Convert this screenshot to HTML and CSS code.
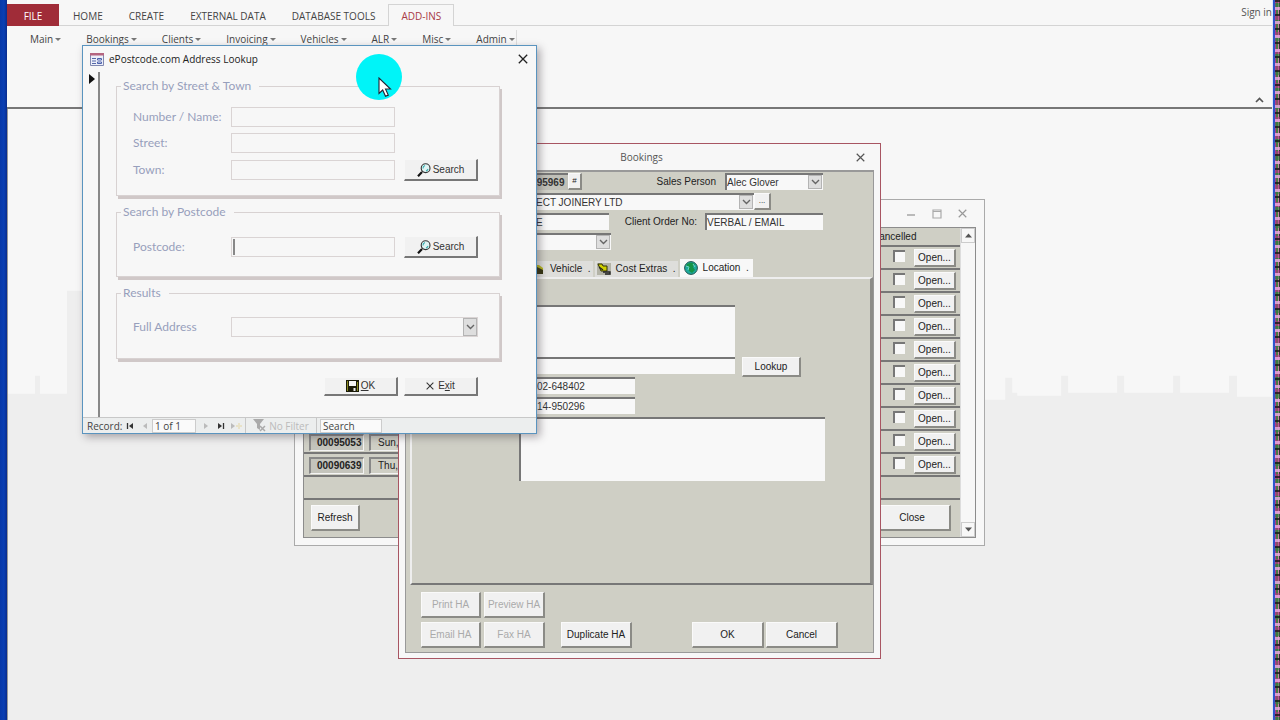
FILE: index.html
```html
<!DOCTYPE html>
<html lang="en">
<head>
<meta charset="utf-8">
<title>Bookings - Address Lookup</title>
<link rel="stylesheet" href="styles.css">
</head>
<body>
<svg class="defs" width="0" height="0" aria-hidden="true">
  <symbol id="chev" viewBox="0 0 9 6"><path d="M1 1l3.5 3.5L8 1" fill="none" stroke="#666" stroke-width="1.4"/></symbol>
  <symbol id="cross" viewBox="0 0 10 10"><path d="M.8.8l8.4 8.4M9.2.8L.8 9.2" fill="none" stroke="currentColor" stroke-width="1.3"/></symbol>
  <symbol id="lens" viewBox="0 0 14 14"><path d="M5 9L1 13.2" stroke="#111" stroke-width="2.2"/><circle cx="8.6" cy="5.2" r="4.4" fill="#dff3f3" stroke="#333" stroke-width="1.1"/><path d="M6 5.5a3 3 0 0 1 2-3M11 6a3 3 0 0 1-2 2" fill="none" stroke="#39b0b0" stroke-width="1.1"/></symbol>
</svg>
<div class="desktop">
  <div class="edge-left"></div>
  <main class="app">
    <header class="ribbon">
      <nav class="tabs">
        <button class="tab file">FILE</button>
        <button class="tab">HOME</button>
        <button class="tab">CREATE</button>
        <button class="tab">EXTERNAL DATA</button>
        <button class="tab">DATABASE TOOLS</button>
        <button class="tab active">ADD-INS</button>
        <a class="signin" href="#">Sign in</a>
      </nav>
      <div class="menus">
        <button class="menu">Main</button>
        <button class="menu">Bookings</button>
        <button class="menu">Clients</button>
        <button class="menu">Invoicing</button>
        <button class="menu">Vehicles</button>
        <button class="menu">ALR</button>
        <button class="menu">Misc</button>
        <button class="menu">Admin</button>
        <span class="menu-end"></span>
      </div>
      <button class="collapse" aria-label="Collapse ribbon"><svg width="9" height="6" viewBox="0 0 9 6"><path d="M1 5l3.500-3.500L8 5" fill="none" stroke="#555" stroke-width="1.7"/></svg></button>
    </header>
    <div class="workspace">
      <svg class="skyline" viewBox="0 0 1265 612" preserveAspectRatio="none" aria-hidden="true">
        <path fill="#eeeeee" d="M0 285H27V267H32V285H59V182H74V285H290V291H998V269H1005V284H1010V287H1054V267H1061V284H1067V284H1110V267H1117V284H1123V284H1166V267H1173V284H1180V284H1222V267H1230V288H1265V612H0Z"/>
      </svg>
    </div>
  </main>
  <div class="edge-line"></div>
  <div class="edge-right"></div>
</div>

<section class="window list-window">
  <div class="list-title">
    <button aria-label="Minimise"><svg width="10" height="10" viewBox="0 0 10 10"><path d="M1 6h8" stroke="#999" stroke-width="1.300"/></svg></button>
    <button aria-label="Maximise"><svg width="10" height="10" viewBox="0 0 10 10"><path d="M1 1h8v8H1zM1 2.500h8" fill="none" stroke="#aaa" stroke-width="1.200"/></svg></button>
    <button aria-label="Close list"><svg width="9" height="9"><use href="#cross"/></svg></button>
  </div>
  <div class="list-body">
    <div class="list-main">
      <table class="rows">
        <thead><tr><th class="c-id"></th><th class="c-date"></th><th class="c-can" colspan="2">Cancelled</th></tr></thead>
        <tbody>
          <tr><td></td><td><span class="cell"></span></td><td><input type="checkbox" aria-label="Cancelled"></td><td><button class="btn open">Open...</button></td></tr>
          <tr><td></td><td><span class="cell"></span></td><td><input type="checkbox" aria-label="Cancelled"></td><td><button class="btn open">Open...</button></td></tr>
          <tr><td></td><td><span class="cell"></span></td><td><input type="checkbox" aria-label="Cancelled"></td><td><button class="btn open">Open...</button></td></tr>
          <tr><td></td><td><span class="cell"></span></td><td><input type="checkbox" aria-label="Cancelled"></td><td><button class="btn open">Open...</button></td></tr>
          <tr><td></td><td><span class="cell"></span></td><td><input type="checkbox" aria-label="Cancelled"></td><td><button class="btn open">Open...</button></td></tr>
          <tr><td></td><td><span class="cell"></span></td><td><input type="checkbox" aria-label="Cancelled"></td><td><button class="btn open">Open...</button></td></tr>
          <tr><td></td><td><span class="cell"></span></td><td><input type="checkbox" aria-label="Cancelled"></td><td><button class="btn open">Open...</button></td></tr>
          <tr><td></td><td><span class="cell"></span></td><td><input type="checkbox" aria-label="Cancelled"></td><td><button class="btn open">Open...</button></td></tr>
          <tr><td><span class="cell id">00095053</span></td><td><span class="cell">Sun,</span></td><td><input type="checkbox" aria-label="Cancelled"></td><td><button class="btn open">Open...</button></td></tr>
          <tr><td><span class="cell id">00090639</span></td><td><span class="cell">Thu,</span></td><td><input type="checkbox" aria-label="Cancelled"></td><td><button class="btn open">Open...</button></td></tr>
          <tr><td></td><td></td><td></td><td></td></tr>
        </tbody>
      </table>
      <div class="list-foot"><button class="btn refresh">Refresh</button><button class="btn close">Close</button></div>
    </div>
    <div class="scroll">
      <button aria-label="Scroll up"><svg width="7" height="5"><path d="M0 4.500L3.500.5 7 4.500z" fill="#555"/></svg></button>
      <button aria-label="Scroll down"><svg width="7" height="5"><path d="M0 .5L3.500 4.500 7 .5z" fill="#555"/></svg></button>
    </div>
  </div>
</section>

<section class="window book-window">
  <div class="book-title"><h2>Bookings</h2><button aria-label="Close Bookings"><svg width="9" height="9"><use href="#cross"/></svg></button></div>
  <div class="book-body">
    <div class="head">
      <div class="line">
        <input class="sunk ref" value="00095969" aria-label="Booking number" readonly><button class="btn mini">#</button>
        <label for="sales" class="push">Sales Person</label>
        <span class="combo sales"><select id="sales" class="sunk"><option>Alec Glover</option></select><i><svg width="9" height="6"><use href="#chev"/></svg></i></span>
      </div>
      <div class="line">
        <span class="combo client"><select class="sunk covered" aria-label="Client"><option>ECT JOINERY LTD</option></select><i><svg width="9" height="6"><use href="#chev"/></svg></i></span><button class="btn mini wide">...</button>
      </div>
      <div class="line">
        <input class="sunk covered contact" value="E" aria-label="Contact">
        <label for="order" class="push order-label">Client Order No:</label>
        <input id="order" class="sunk order" value="VERBAL / EMAIL">
      </div>
      <div class="line">
        <span class="combo status"><select class="sunk" aria-label="Status"><option></option></select><i><svg width="9" height="6"><use href="#chev"/></svg></i></span>
      </div>
    </div>
    <div class="pagetabs">
      <button class="ptab"><svg width="14" height="12" viewBox="0 0 14 12"><path d="M0 2h8l4 3v6H0z" fill="#b7b71e"/><path d="M6 4l6 3v4H5z" fill="#33330f"/></svg>Vehicle&nbsp; .</button>
      <button class="ptab"><svg width="14" height="12" viewBox="0 0 14 12"><path d="M0 0h14v12H0z" fill="#b3b3a6"/><path d="M1 1h4l1 2h4v5H4z" fill="#d0d000" stroke="#333300"/><path d="M2 4l4 3M6 9h7v2H8" fill="none" stroke="#222" stroke-width="1.300"/></svg>Cost Extras&nbsp; .</button>
      <button class="ptab on"><svg width="14" height="14" viewBox="0 0 14 14"><circle cx="7" cy="7" r="6.400" fill="#1ca99d" stroke="#24534f"/><path d="M3 3l4-1.500 4 1.500-2 3 2 3-3 3-3-2-1-4-2-1z" fill="#159447"/><path d="M2 5l3 1-1 3M9 3l2 3" fill="none" stroke="#6ed5cb"/></svg>Location&nbsp; .</button>
    </div>
    <div class="pane">
      <textarea class="sunk addr" aria-label="Address"></textarea>
      <div class="post"><input class="sunk" aria-label="Postcode of location"><button class="btn lookup">Lookup</button></div>
      <input class="sunk phone covered" value="02-648402" aria-label="Phone">
      <input class="sunk phone covered" value="14-950296" aria-label="Mobile">
      <textarea class="sunk notes" aria-label="Notes"></textarea>
    </div>
    <div class="actions">
      <div class="ha"><button class="btn" disabled>Print HA</button><button class="btn" disabled>Preview HA</button><button class="btn" disabled>Email HA</button><button class="btn" disabled>Fax HA</button></div>
      <button class="btn dup">Duplicate HA</button>
      <div class="confirm"><button class="btn">OK</button><button class="btn">Cancel</button></div>
    </div>
  </div>
</section>

<section class="window lookup-window">
  <div class="lk-title">
    <svg width="14" height="13" viewBox="0 0 14 13"><path d="M.5.5h13v12H.5z" fill="#eceef8" stroke="#8088b0"/><path d="M0 0h14v2.500H0z" fill="#b56580"/><path d="M2 5.500h4M2 8h4M2 10.500h4" stroke="#5468a8"/><path d="M7.500 5.500h4v1.500h-4zM7.500 9h4v1.500h-4z" fill="#fff" stroke="#4a60ac"/></svg>
    <h2>ePostcode.com Address Lookup</h2>
    <button aria-label="Close"><svg width="10" height="10"><use href="#cross"/></svg></button>
  </div>
  <div class="lk-body">
    <div class="selector"><svg width="6" height="10"><path d="M0 0l6 5-6 5z" fill="#111"/></svg></div>
    <form class="lk-form">
      <fieldset>
        <legend>Search by Street &amp; Town</legend>
        <div class="fields">
          <label for="num">Number / Name:</label><input id="num"><span></span>
          <label for="street">Street:</label><input id="street"><span></span>
          <label for="town">Town:</label><input id="town"><button type="button" class="btn flat"><svg width="14" height="14"><use href="#lens"/></svg>Search</button>
        </div>
      </fieldset>
      <fieldset class="roomy">
        <legend>Search by Postcode</legend>
        <div class="fields">
          <label for="pc">Postcode:</label><input id="pc" class="caret"><button type="button" class="btn flat"><svg width="14" height="14"><use href="#lens"/></svg>Search</button>
        </div>
      </fieldset>
      <fieldset class="roomy results">
        <legend>Results</legend>
        <div class="fields">
          <label for="full">Full Address</label>
          <span class="combo full"><select id="full"><option></option></select><i><svg width="9" height="6"><use href="#chev"/></svg></i></span>
        </div>
      </fieldset>
      <div class="lk-actions">
        <button type="button" class="btn flat"><svg width="13" height="12" viewBox="0 0 13 12"><path d="M0 0h13v12H0z" fill="#1a1a08"/><path d="M1 1h1v10H1zM11 2h1v9h-1z" fill="#8a8a20"/><path d="M3 1h7v5H3z" fill="#f4f4f4"/><path d="M7.500 8h2v3h-2z" fill="#eee"/></svg><span><u>O</u>K</span></button>
        <button type="button" class="btn flat exit"><svg width="8" height="8"><use href="#cross"/></svg><span>E<u>x</u>it</span></button>
      </div>
    </form>
  </div>
  <div class="nav">
    <label for="rec">Record:</label>
    <button aria-label="First"><svg width="8" height="8" viewBox="0 0 8 8"><path d="M1.500 1v6" stroke="#333" stroke-width="1.300"/><path d="M7 1L3 4l4 3z" fill="#333"/></svg></button>
    <button aria-label="Previous"><svg width="8" height="8"><path d="M6 1L2 4l4 3z" fill="#bbb"/></svg></button>
    <input id="rec" class="rec" value="1 of 1">
    <button aria-label="Next"><svg width="8" height="8"><path d="M2 1L6 4 2 7z" fill="#bbb"/></svg></button>
    <button aria-label="Last"><svg width="8" height="8" viewBox="0 0 8 8"><path d="M6.500 1v6" stroke="#333" stroke-width="1.300"/><path d="M1 1l4 3-4 3z" fill="#333"/></svg></button>
    <button aria-label="New record"><svg width="12" height="8"><path d="M1 1L5 4 1 7z" fill="#bbb"/><path d="M9 1v6M6 4h6" stroke="#e8e2c8" stroke-width="2"/></svg></button>
    <button class="filter" disabled><svg width="13" height="13" viewBox="0 0 13 13"><path d="M0 0h11L7 5v6L4 9V5z" fill="#aaa"/><path d="M7 7l5 5M12 7l-5 5" stroke="#aaa" stroke-width="1.500"/></svg>No Filter</button>
    <input class="find" value="Search" aria-label="Search records">
  </div>
</section>

<div class="pointer" aria-hidden="true"><svg width="14" height="21" viewBox="0 0 14 21"><path d="M1 1v15.500l3.700-3.500 2.800 6.300 2.800-1.200-2.800-6.100h5z" fill="#fff" stroke="#223" stroke-width="1.100"/></svg></div>
</body>
</html>
```
FILE: styles.css
```css
* { box-sizing: border-box; }
body { margin: 0; min-height: 100vh; overflow: hidden; font: 10px/14px "Open Sans", "Noto Sans", sans-serif; color: #444; }
button, input, select, textarea { font: inherit; color: inherit; margin: 0; padding: 0; border: 0; border-radius: 0; background: none; outline: 0; }
h2 { margin: 0; font-size: 10px; font-weight: 400; }
svg { display: block; flex: none; }
.defs { position: absolute; }

/* Application frame */
.desktop { display: flex; min-height: 100vh; }
.edge-left { width: 7px; background: linear-gradient(90deg, #0838a8, #0a3fb4 4px, #0a2c8c); }
.edge-line { width: 3px; background: linear-gradient(90deg, #dfe6fa 1px, #2e55cc 1px); }
.edge-right { width: 5px; background:
  repeating-linear-gradient(0deg, transparent 0 5px, rgba(20, 20, 20, .75) 5px 7px, transparent 7px 11px, rgba(240, 170, 230, .8) 11px 14px),
  repeating-linear-gradient(0deg, rgba(40, 130, 60, .5) 0 4px, rgba(190, 50, 140, .5) 4px 9px, transparent 9px 17px),
  repeating-linear-gradient(90deg, #b03a86 0 1px, #4a7a44 1px 3px, #c58aa0 3px 4px, #333 4px 5px); }
.app { flex: 1; display: flex; flex-direction: column; background: #f7f7f7; }
.ribbon { display: flex; flex-direction: column; height: 109px; border-bottom: 2px solid #777; }
.tabs { display: flex; height: 26px; padding-top: 4px; border-bottom: 1px solid #d4d4d4; }
.tab { height: 22px; padding: 0 12px; border: 1px solid transparent; border-bottom: 0; }
.tab.file { width: 52px; background: #a02c38; color: #fff; margin-right: 1px; }
.tab.active { color: #a83a44; background: #f7f7f7; border-color: #d4d4d4; }
.signin { margin-left: auto; line-height: 16px; color: #555; text-decoration: none; }
.menus { display: flex; height: 26px; padding-left: 23px; align-items: center; }
.menu { display: flex; align-items: center; gap: 2px; margin-right: 25px; }
.menu::after { content: ""; border: solid transparent; border-width: 3px 3px 0; border-top-color: #777; }
.menu-end { width: 1px; height: 18px; background: #ddd; margin-left: -24px; }
.collapse { margin: auto 8px 4px auto; }
.workspace { flex: 1; display: flex; border-left: 1px solid #999; }
.skyline { width: 100%; flex: 1; height: auto; }

/* Shared controls */
.window { position: absolute; display: flex; flex-direction: column; background: #f7f7f7; }
.btn { display: flex; align-items: center; justify-content: center; background: #f1f1f1; color: #222; border: solid; border-width: 1px 2px 2px 1px; border-color: #fafafa #8b8b86 #8b8b86 #fafafa; }
.btn:disabled { color: #aaa; }
.sunk { background: #f8f8f8; border: solid #777; border-width: 2px 0 0 2px; color: #333; }
textarea { display: block; resize: none; }
select { appearance: none; width: 100%; height: 100%; }
.combo { position: relative; display: block; }
.combo i { position: absolute; right: 1px; top: 2px; bottom: 1px; width: 14px; display: grid; place-items: center; background: #dedede; border: 1px solid #b4b4b4; pointer-events: none; }

/* Bookings list */
.list-window { left: 294px; top: 199px; width: 691px; height: 347px; border: 1px solid #aaa; padding: 0 8px 7px; font-family: "Liberation Sans", Arial, sans-serif; }
.list-title { flex: none; display: flex; justify-content: flex-end; align-items: center; gap: 16px; height: 27px; padding-right: 9px; color: #999; }
.list-body { flex: 1; display: flex; border: 1px solid #8c8c8c; background: #cfcfc5; }
.list-main { flex: 1; display: flex; flex-direction: column; }
.rows { width: 100%; border-collapse: collapse; table-layout: fixed; color: #222; }
.rows tr { height: 23px; }
.rows thead tr { height: 18px; }
.rows th { padding: 0; font-weight: 400; text-align: left; border-bottom: 2px solid #777; }
.rows td { padding: 2px 0 1px; border-bottom: 2px solid #777; height: 23px; }
.rows td:first-child { padding-left: 5px; }
.c-id { width: 65px; }
.rows .c-can { width: 88px; }
.cell { display: block; height: 17px; line-height: 14px; padding-left: 7px; border: solid; border-width: 2px 1px 1px 2px; border-color: #888 #f4f4f4 #f4f4f4 #888; margin-right: 2px; }
.cell.id { padding-left: 6px; margin-right: 5px; font-weight: 700; background: #c4c4bc; }
.rows input { appearance: none; display: block; width: 12px; height: 12px; margin: -4px 0 0 21px; background: #f8f8f8; border: solid #777; border-width: 2px 0 0 2px; }
.open { width: 42px; height: 18px; margin-left: -2px; }
.list-foot { flex: 1; display: flex; justify-content: space-between; align-items: flex-start; padding: 5px 9px 0 7px; }
.list-foot .btn { height: 26px; }
.refresh { width: 49px; }
.close { width: 77px; }
.scroll { width: 15px; display: flex; flex-direction: column; justify-content: space-between; background: #f7f7f7; border-left: 1px solid #ddd; }
.scroll button { display: grid; place-items: center; height: 15px; border: 1px solid #ccc; }

/* Booking form */
.book-window { left: 398px; top: 143px; width: 483px; height: 516px; border: 1px solid #a85562; padding: 0 6px 5px; font-family: "Liberation Sans", Arial, sans-serif; }
.book-title { flex: none; display: flex; align-items: center; height: 26px; color: #555; }
.book-title h2 { flex: 1; text-align: center; font-family: "Open Sans", sans-serif; padding-left: 22px; }
.book-title button { margin-right: 9px; }
.book-body { flex: 1; display: flex; flex-direction: column; background: #cfcfc5; border: 1px solid #999; border-width: 2px 1px 1px; padding: 1px 0 0 4px; color: #222; }
.head { display: flex; flex-direction: column; gap: 3px; padding: 0 50px 0 108px; }
.line { display: flex; align-items: center; height: 17px; }
.line > input, .line > .combo { height: 17px; }
.push { margin-left: auto; margin-right: 9px; }
.ref { width: 50px; background: #c0c0b8; font-weight: 700; }
.mini { width: 14px; height: 17px; font-size: 8px; }
.mini.wide { width: 17px; }
.sales { width: 98px; }
.client { width: 236px; }
.contact { width: 91px; }
.covered { padding-left: 16px; }
.order { width: 118px; }
.order-label { margin-right: 8px; }
.status { width: 93px; }
.pagetabs { display: flex; align-items: flex-end; gap: 2px; height: 27px; padding-left: 119px; }
.ptab { display: flex; align-items: center; gap: 5px; height: 16px; padding: 0 2px; background: #dededb; }
.ptab.on { height: 18px; background: #f8f8f8; padding: 0 4px; }
.pane { display: flex; flex-direction: column; align-items: flex-start; height: 308px; padding: 26px 0 0 107px; border: solid; border-width: 2px 3px 2px 2px; border-color: #eee #8c8c88 #777 #eee; }
.addr { width: 216px; height: 52px; }
.post { display: flex; gap: 7px; height: 20px; }
.post input { width: 216px; height: 17px; }
.lookup { width: 59px; height: 20px; }
.phone { width: 116px; height: 17px; margin-bottom: 3px; }
.notes { width: 306px; height: 64px; }
.actions { display: flex; align-items: flex-end; padding: 7px 35px 0 11px; }
.actions .btn { height: 26px; }
.ha { display: grid; grid-template-columns: 60px 61px; gap: 4px 3px; }
.dup { width: 71px; margin-left: 16px; }
.confirm { display: flex; gap: 2px; margin-left: auto; }
.confirm .btn { width: 72px; }

/* Address lookup */
.lookup-window { left: 82px; top: 45px; width: 455px; height: 389px; border: 1px solid #5a94bf; box-shadow: 3px 3px 8px rgba(60, 50, 60, .4); }
.lk-title { display: flex; align-items: center; gap: 5px; height: 26px; padding: 0 8px 0 7px; color: #222; }
.lk-title button { margin-left: auto; }
.lk-body { flex: 1; display: flex; }
.selector { width: 17px; border-right: 2px solid #888; padding: 2px 0 0 6px; }
.lk-form { flex: 1; display: flex; flex-direction: column; gap: 7px; padding: 5px 36px 0 16px; font: 12px/18px Lato, sans-serif; color: #979fbc; }
fieldset { min-width: 0; margin: 0; padding: 12px 16px 14px; border: 1px solid #d8d2d2; box-shadow: 2px 3px 0 #d0c8c8; }
fieldset.roomy { padding: 15px 16px 18px; }
fieldset.results { padding-bottom: 21px; }
legend { height: 18px; padding: 0 8px 0 2px; margin-left: -12px; }
.fields { display: grid; grid-template-columns: 98px 164px 74px; row-gap: 6px; align-items: center; }
.fields input, .full select { height: 20px; border: 1px solid #dad4d4; }
.fields .btn { margin-left: 9px; }
.full { grid-column: 2 / 4; height: 20px; width: 247px; }
.full i { top: 1px; }
.flat { width: 74px; gap: 2px; height: 22px; font: 10px/14px "Liberation Sans", Arial, sans-serif; color: #333; border-color: #f7f7f7 #777 #777 #f7f7f7; }
#pc.caret { background: linear-gradient(#888, #888) 1px 1px / 2px 16px no-repeat; }
.lk-actions { display: flex; justify-content: flex-end; gap: 6px; padding: 11px 22px 0 0; }
.lk-actions .btn { height: 19px; }
.exit { gap: 4px; }
.nav { display: flex; align-items: center; height: 16px; padding-left: 4px; background: #eceeee; border-top: 1px solid #c8c8c8; }
.nav button { display: flex; align-items: center; justify-content: center; width: 15px; }
.nav label { width: 35px; }
.rec { width: 44px; height: 14px; margin: 0 2px 0 0; padding-left: 2px; border: 1px solid #ccc; background: #fafafa; }
.nav .filter { width: 72px; height: 15px; gap: 3px; margin: 0 3px 0 2px; border: solid #c8c8c8; border-width: 0 1px; color: #bbb; }
.find { width: 62px; height: 14px; padding-left: 2px; border: 1px solid #ccc; background: #fafafa; }

/* Highlighted mouse pointer */
.pointer { position: absolute; left: 356px; top: 54px; width: 46px; height: 46px; padding: 23px 0 0 22px; border-radius: 50%; background: #00f4f8; }
```
